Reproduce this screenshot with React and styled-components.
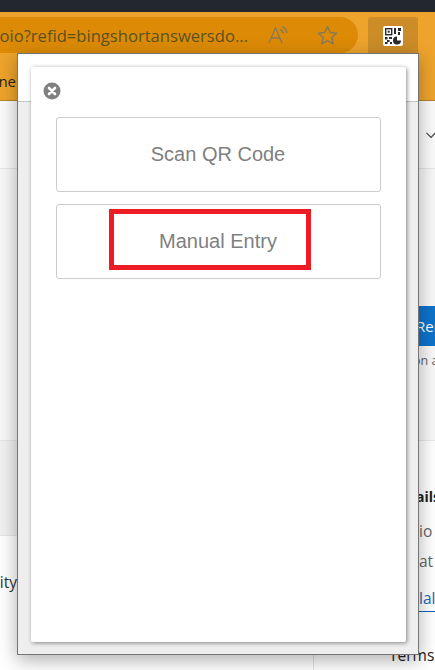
import React from "react";
import styled, { createGlobalStyle } from "styled-components";

const Global = createGlobalStyle`
  html, body { margin: 0; padding: 0; height: 670px; overflow: hidden; background: #fff; }
  * { box-sizing: border-box; }
  #root { height: 670px; }
`;

const Screen = styled.div`
  position: relative;
  width: 435px;
  height: 670px;
  overflow: hidden;
  display: flex;
  flex-direction: column;
  font-family: "Open Sans", "Noto Sans", sans-serif;
`;

const TitleBar = styled.div`
  height: 12px;
  flex: none;
  background: #23272e;
`;

const Toolbar = styled.div`
  height: 48px;
  flex: none;
  background: #eea42c;
  display: flex;
  align-items: flex-start;
  padding-top: 5px;
`;

const UrlPill = styled.div`
  width: 378px;
  height: 36px;
  margin-left: -20px;
  flex: none;
  background: #dd8b06;
  border-radius: 18px;
  display: flex;
  align-items: center;
`;

const UrlText = styled.span`
  width: 268px;
  flex: none;
  display: flex;
  justify-content: flex-end;
  white-space: nowrap;
  font-size: 16.6px;
  color: #5b5220;
`;

const PillIcon = styled.svg`
  flex: none;
  margin-left: ${(p) => p.$gap}px;
`;

const QrButton = styled.div`
  width: 50px;
  height: 40px;
  margin-left: 10px;
  flex: none;
  background: #cc8d28;
  border-radius: 3px;
  padding: 9px 15px;
`;

const BookmarkBar = styled.div`
  height: 41px;
  flex: none;
  background: #eea42c;
  border-bottom: 1px solid #b9812a;
  font-size: 15px;
  line-height: 20px;
  padding-top: 11px;
  color: #2b2415;
`;

const ClippedWord = styled.div`
  width: ${(p) => p.$width}px;
  display: flex;
  justify-content: flex-end;
  white-space: nowrap;
  overflow: hidden;
`;

const TabBand = styled.div`
  height: 68px;
  flex: none;
  background: #fbfbfb;
  border-bottom: 1px solid #e6e6e6;
  display: flex;
  justify-content: flex-end;
  align-items: center;
`;

const Chevron = styled.svg`
  margin-right: -1px;
  margin-top: 2px;
`;

const Content = styled.div`
  height: 272px;
  flex: none;
  background: #f8f8f8;
  border-bottom: 1px solid #e8e8e8;
  padding: 137px 0 0 419px;
`;

const BlueButton = styled.div`
  width: 40px;
  height: 40px;
  background: #0e73cc;
  color: #fff;
  font-size: 15px;
  line-height: 40px;
  text-indent: -3px;
  white-space: nowrap;
  overflow: hidden;
`;

const Caption = styled.div`
  font-size: 12.5px;
  line-height: 18px;
  color: #666;
  white-space: nowrap;
  margin-top: 6px;
  text-indent: -6px;
`;

const Columns = styled.div`
  flex: 1;
  display: flex;
  min-height: 0;
`;

const MainColumn = styled.div`
  width: 313px;
  flex: none;
  display: flex;
  flex-direction: column;
`;

const Details = styled.div`
  height: 95px;
  flex: none;
  background: linear-gradient(90deg, #f1f1f1, #fafafa);
  border-bottom: 1px solid #e8e8e8;
`;

const LeftWord = styled.div`
  padding-top: 35px;
  font-size: 15.5px;
  line-height: 22px;
  color: #333;
`;

const SideColumn = styled.div`
  flex: 1;
  min-width: 0;
  background: #fff;
  border-left: 1px solid #e4e4e4;
  padding: 44px 0 0 105px;
  white-space: nowrap;
`;

const Bold = styled.div`
  font-weight: 700;
  font-size: 14px;
  color: #222;
  line-height: 24px;
  text-indent: -3px;
`;

const Muted = styled.div`
  font-size: 15.5px;
  color: #666;
  line-height: 30px;
  margin-top: ${(p) => p.$top || 0}px;
`;

const LinkText = styled.div`
  height: 27px;
  margin-top: 9px;
  border-bottom: 1px solid #0e63b5;
  font-size: 15.5px;
  line-height: 26px;
  color: #1769b8;
`;

const Terms = styled.div`
  margin: 31px 0 0 -30px;
  font-size: 15.5px;
  line-height: 24px;
  color: #222;
`;

const Popup = styled.div`
  position: absolute;
  left: 17px;
  top: 53px;
  width: 402px;
  height: 602px;
  border: 1px solid #757575;
  padding: 13px;
  background: linear-gradient(#fff 0, #fff 47px, #c4c4c4 47px, #c4c4c4 48px, #eeeeee 48px);
  box-shadow: 0 5px 18px rgba(0, 0, 0, 0.32);
`;

const Card = styled.div`
  position: relative;
  width: 375px;
  height: 575px;
  background: #fff;
  border-radius: 2px;
  box-shadow: 1px 1px 4px rgba(0, 0, 0, 0.45);
  padding: 15px 0 0 12px;
`;

const CloseIcon = styled.svg`
  display: block;
`;

const Options = styled.div`
  display: flex;
  flex-direction: column;
  gap: 12px;
  margin: 17px 0 0 13px;
`;

const Option = styled.div`
  position: relative;
  width: 325px;
  height: 75px;
  border: 1px solid #cccccc;
  border-radius: 3px;
  display: flex;
  align-items: center;
  justify-content: center;
  padding-right: 1px;
  font-family: "Liberation Sans", Arial, sans-serif;
  font-size: 20px;
  color: #808080;
`;

const Highlight = styled.div`
  position: absolute;
  left: 52px;
  top: 4px;
  width: 202px;
  height: 61px;
  border: 5px solid #ed1c24;
`;

function QrIcon() {
  return (
    <svg width="20" height="20" viewBox="0 0 20 20" style={{ display: "block" }}>
      <rect width="20" height="20" rx="2" fill="#fff" />
      <g fill="none" stroke="#2a2a2a" strokeWidth="1.4">
        <rect x="2.7" y="2.7" width="6" height="6" />
      </g>
      <g fill="#2a2a2a">
        <rect x="4.7" y="4.7" width="2" height="2" />
        <rect x="11" y="2" width="2" height="6" />
        <rect x="15" y="2" width="3" height="3" />
        <rect x="15" y="6" width="2" height="3" />
        <rect x="2" y="11" width="2.5" height="2.5" />
        <rect x="6" y="11" width="3" height="2" />
        <rect x="4" y="14" width="2.5" height="2" />
        <rect x="2" y="16" width="2.5" height="2" />
        <rect x="7" y="16" width="2" height="2" />
        <path d="M14 10.5 a4 4 0 1 0 4 4 h-4z" />
      </g>
    </svg>
  );
}

export default function App() {
  return (
    <>
      <Global />
      <Screen>
        <TitleBar />
        <Toolbar>
          <UrlPill>
            <UrlText>oio?refid=bingshortanswersdo...</UrlText>
            <PillIcon $gap={20} width="21" height="20" viewBox="0 0 21 20" fill="none" stroke="#8a7a55" strokeWidth="1.3">
              <path d="M1 18 L7.5 3 L14 18 M3.4 13 H11.6" />
              <path d="M12 4.5 a5 5 0 0 1 3.5 4 M14 1.5 a8.5 8.5 0 0 1 5 6.5" strokeWidth="1.5" />
            </PillIcon>
            <PillIcon $gap={28} width="21" height="20" viewBox="0 0 21 20" fill="none" stroke="#8a7a55" strokeWidth="1.5">
              <path d="M10.5 1.5 L13.2 7.5 L19.7 8.2 L14.8 12.5 L16.2 18.8 L10.5 15.6 L4.8 18.8 L6.2 12.5 L1.3 8.2 L7.8 7.5 Z" strokeLinejoin="round" />
            </PillIcon>
          </UrlPill>
          <QrButton>
            <QrIcon />
          </QrButton>
        </Toolbar>
        <BookmarkBar>
          <ClippedWord $width={16}>ne</ClippedWord>
        </BookmarkBar>
        <TabBand>
          <Chevron width="10" height="7" viewBox="0 0 10 7" fill="none" stroke="#444" strokeWidth="1.2">
            <path d="M0.5 0.8 L5 5.5 L9.5 0.8" />
          </Chevron>
        </TabBand>
        <Content>
          <BlueButton>Remove</BlueButton>
          <Caption>on a</Caption>
        </Content>
        <Columns>
          <MainColumn>
            <Details />
            <LeftWord>
              <ClippedWord $width={17}>ity</ClippedWord>
            </LeftWord>
          </MainColumn>
          <SideColumn>
            <Bold>ails</Bold>
            <Muted $top={7}>io</Muted>
            <Muted>at</Muted>
            <LinkText>lal</LinkText>
            <Terms>Terms</Terms>
          </SideColumn>
        </Columns>
        <Popup>
          <Card>
            <CloseIcon width="18" height="18" viewBox="0 0 18 18">
              <circle cx="9" cy="9" r="8.5" fill="#808080" />
              <path d="M6 6 L12 12 M12 6 L6 12" stroke="#fff" strokeWidth="2.6" strokeLinecap="round" />
            </CloseIcon>
            <Options>
              <Option>Scan QR Code</Option>
              <Option>
                Manual Entry
                <Highlight />
              </Option>
            </Options>
          </Card>
        </Popup>
      </Screen>
    </>
  );
}
